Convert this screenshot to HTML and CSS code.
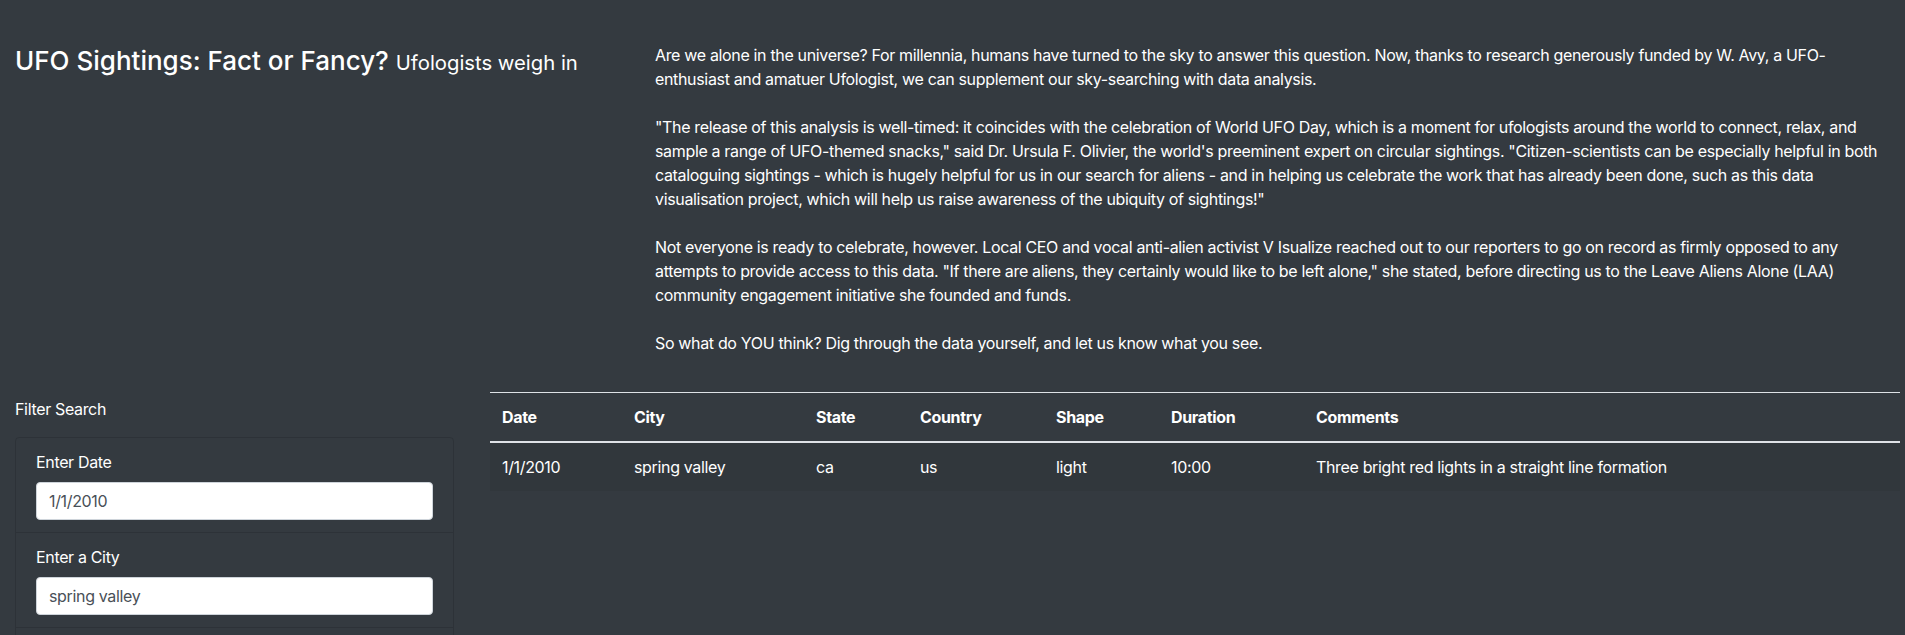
FILE: index.html
```html
<!DOCTYPE html>
<html lang="en">
<head>
<meta charset="utf-8">
<title>UFO Sightings: Fact or Fancy?</title>
<link rel="stylesheet" href="styles.css">
</head>
<body>
<div class="page">
  <header class="intro">
    <div class="title-col">
      <h1 class="title">UFO Sightings: Fact or Fancy? <small>Ufologists weigh in</small></h1>
    </div>
    <div class="story">
      <p>Are we alone in the universe? For millennia, humans have turned to the sky to answer this question. Now, thanks to research generously funded by W. Avy, a UFO-enthusiast and amatuer Ufologist, we can supplement our sky-searching with data analysis.</p>
      <p>"The release of this analysis is well-timed: it coincides with the celebration of World UFO Day, which is a moment for ufologists around the world to connect, relax, and sample a range of UFO-themed snacks," said Dr. Ursula F. Olivier, the world's preeminent expert on circular sightings. "Citizen-scientists can be especially helpful in both cataloguing sightings - which is hugely helpful for us in our search for aliens - and in helping us celebrate the work that has already been done, such as this data visualisation project, which will help us raise awareness of the ubiquity of sightings!"</p>
      <p>Not everyone is ready to celebrate, however. Local CEO and vocal anti-alien activist V Isualize reached out to our reporters to go on record as firmly opposed to any attempts to provide access to this data. "If there are aliens, they certainly would like to be left alone," she stated, before directing us to the Leave Aliens Alone (LAA) community engagement initiative she founded and funds.</p>
      <p class="last">So what do YOU think? Dig through the data yourself, and let us know what you see.</p>
    </div>
  </header>
  <main class="data">
    <aside class="filters">
      <h2 class="filters-title">Filter Search</h2>
      <ul class="filter-list">
        <li class="filter-item">
          <label class="filter-label" for="datetime">Enter Date</label>
          <input class="filter-input" id="datetime" type="text" value="1/1/2010">
        </li>
        <li class="filter-item">
          <label class="filter-label" for="city">Enter a City</label>
          <input class="filter-input" id="city" type="text" value="spring valley">
        </li>
        <li class="filter-item">
          <label class="filter-label" for="state">Enter a State</label>
          <input class="filter-input" id="state" type="text" placeholder="ca">
        </li>
      </ul>
    </aside>
    <section class="results">
      <table class="sightings">
        <colgroup>
          <col class="c-date">
          <col class="c-city">
          <col class="c-state">
          <col class="c-country">
          <col class="c-shape">
          <col class="c-duration">
          <col class="c-comments">
        </colgroup>
        <thead>
          <tr>
            <th>Date</th>
            <th>City</th>
            <th>State</th>
            <th>Country</th>
            <th>Shape</th>
            <th>Duration</th>
            <th>Comments</th>
          </tr>
        </thead>
        <tbody>
          <tr>
            <td>1/1/2010</td>
            <td>spring valley</td>
            <td>ca</td>
            <td>us</td>
            <td>light</td>
            <td>10:00</td>
            <td>Three bright red lights in a straight line formation</td>
          </tr>
        </tbody>
      </table>
    </section>
  </main>
</div>
</body>
</html>
```

FILE: styles.css
```css
html, body {
  margin: 0;
  padding: 0;
}

body {
  background: #343a40;
  color: #fff;
  font-family: Inter, "Noto Sans", "Liberation Sans", sans-serif;
  font-size: 16px;
  line-height: 1.5;
  letter-spacing: -0.34px;
}

.page {
  padding: 43px 5px 0 15px;
}

.intro {
  display: flex;
  align-items: flex-start;
}

.title-col {
  flex: none;
  width: 640px;
}

.title {
  margin: 2px 0 0;
  font-size: 26px;
  font-weight: 500;
  line-height: 1.2;
  letter-spacing: 0;
}

.title small {
  font-size: 0.78em;
  font-weight: 400;
}

.story {
  flex: 1;
  padding-right: 10px;
}

.story p {
  margin: 0 0 24px;
}

.story p.last {
  margin-bottom: 37px;
}

.data {
  display: flex;
  align-items: flex-start;
  gap: 36px;
}

.filters {
  flex: none;
  width: 439px;
}

.filters-title {
  margin: 5px 0 16px;
  font-size: 16px;
  font-weight: 400;
  line-height: 24px;
}

.filter-list {
  list-style: none;
  margin: 0;
  padding: 0;
}

.filter-item {
  padding: 12px 20px;
  border: 1px solid rgba(0, 0, 0, 0.125);
}

.filter-item + .filter-item {
  border-top-width: 0;
}

.filter-item:first-child {
  border-radius: 4px 4px 0 0;
}

.filter-label {
  display: block;
  margin-bottom: 8px;
}

.filter-input {
  display: block;
  box-sizing: border-box;
  width: 100%;
  height: 38px;
  padding: 6px 12px;
  font-family: inherit;
  font-size: 16px;
  line-height: 1.5;
  letter-spacing: inherit;
  color: #495057;
  background: #fff;
  border: 1px solid #ced4da;
  border-radius: 4px;
}

.results {
  flex: 1;
}

.sightings {
  width: 100%;
  border-collapse: collapse;
  table-layout: fixed;
  color: #fff;
}

.sightings th,
.sightings td {
  padding: 12px;
  text-align: left;
  vertical-align: top;
  border-top: 1px solid #dee2e6;
}

.sightings th {
  font-weight: 700;
  border-bottom: 2px solid #dee2e6;
}

.sightings tbody tr:nth-child(odd) {
  background: rgba(0, 0, 0, 0.05);
}

.c-date { width: 132px; }
.c-city { width: 182px; }
.c-state { width: 104px; }
.c-country { width: 136px; }
.c-shape { width: 115px; }
.c-duration { width: 145px; }
```
